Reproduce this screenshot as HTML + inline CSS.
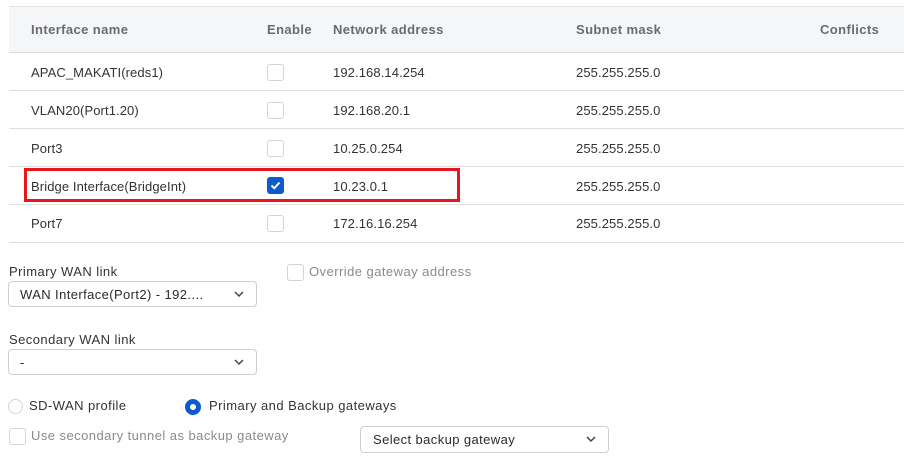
<!DOCTYPE html>
<html><head><style>
*{box-sizing:border-box;margin:0;padding:0}
body{width:904px;height:461px;background:#fff;font-family:"Liberation Sans",sans-serif;font-size:13px;color:#2b2b2b;position:relative;overflow:hidden;letter-spacing:0.1px}
.abs{position:absolute}
.hdr{left:9px;top:6px;width:895px;height:47px;background:#f5f6f8;border-top:1px solid #e3e3e3;border-bottom:1px solid #dcdcdc}
.th{position:absolute;top:22px;font-weight:bold;color:#6b6b6b;font-size:13px;letter-spacing:0.4px}
.row{left:9px;width:895px;height:38px;border-bottom:1px solid #dedede}
.cb{position:absolute;width:17px;height:17px;border:1px solid #d4d4d4;border-radius:3px;background:#fff}
.sel{position:absolute;height:26px;border:1px solid #d0d0d0;border-radius:4px;background:#fff}
.sel span{position:absolute;left:11px;top:5px;letter-spacing:0.4px}
.chev{position:absolute;right:12px;top:8px}
.lbl{position:absolute;color:#333}
.f{letter-spacing:0.45px}
.grey{color:#8a8a8a}
</style></head><body>
<div class="abs hdr"></div>
<div class="th" style="left:31px">Interface name</div>
<div class="th" style="left:267px">Enable</div>
<div class="th" style="left:333px">Network address</div>
<div class="th" style="left:576px">Subnet mask</div>
<div class="th" style="left:820px">Conflicts</div>

<div class="abs row" style="top:53px"></div>
<div class="abs row" style="top:91px"></div>
<div class="abs row" style="top:129px"></div>
<div class="abs row" style="top:167px"></div>
<div class="abs row" style="top:205px"></div>

<div class="lbl" style="left:31px;top:65px">APAC_MAKATI(reds1)</div>
<div class="lbl" style="left:31px;top:103px">VLAN20(Port1.20)</div>
<div class="lbl" style="left:31px;top:141px">Port3</div>
<div class="lbl" style="left:31px;top:179px">Bridge Interface(BridgeInt)</div>
<div class="lbl" style="left:31px;top:216px">Port7</div>

<div class="cb" style="left:267px;top:64px"></div>
<div class="cb" style="left:267px;top:102px"></div>
<div class="cb" style="left:267px;top:140px"></div>
<div class="cb" style="left:267px;top:177px;background:#0a5ccc;border-color:#0a5ccc"><svg width="15" height="15" viewBox="0 0 15 15" style="position:absolute;left:0;top:0"><path d="M3.5 7.5 L6.3 10.2 L11.5 4.5" stroke="#fff" stroke-width="2" fill="none"/></svg></div>
<div class="cb" style="left:267px;top:215px"></div>

<div class="lbl" style="left:333px;top:65px">192.168.14.254</div>
<div class="lbl" style="left:333px;top:103px">192.168.20.1</div>
<div class="lbl" style="left:333px;top:141px">10.25.0.254</div>
<div class="lbl" style="left:333px;top:179px">10.23.0.1</div>
<div class="lbl" style="left:333px;top:216px">172.16.16.254</div>
<div class="lbl" style="left:576px;top:65px">255.255.255.0</div>
<div class="lbl" style="left:576px;top:103px">255.255.255.0</div>
<div class="lbl" style="left:576px;top:141px">255.255.255.0</div>
<div class="lbl" style="left:576px;top:179px">255.255.255.0</div>
<div class="lbl" style="left:576px;top:216px">255.255.255.0</div>

<div class="abs" style="left:24px;top:168px;width:436px;height:34px;border:3px solid #e8141e"></div>

<div class="lbl f" style="left:9px;top:264px">Primary WAN link</div>
<div class="sel" style="left:8px;top:281px;width:249px"><span>WAN Interface(Port2) - 192....</span><svg class="chev" width="10" height="8" viewBox="0 0 10 8"><path d="M1 2 L5 6 L9 2" stroke="#444" stroke-width="1.5" fill="none"/></svg></div>
<div class="cb" style="left:287px;top:264px"></div>
<div class="lbl grey f" style="left:309px;top:264px">Override gateway address</div>

<div class="lbl f" style="left:9px;top:332px">Secondary WAN link</div>
<div class="sel" style="left:8px;top:349px;width:249px"><span>-</span><svg class="chev" width="10" height="8" viewBox="0 0 10 8"><path d="M1 2 L5 6 L9 2" stroke="#444" stroke-width="1.5" fill="none"/></svg></div>

<div class="abs" style="left:8px;top:399px;width:15px;height:15px;border:1px solid #d4d4d4;border-radius:50%"></div>
<div class="lbl f" style="left:29px;top:398px">SD-WAN profile</div>
<div class="abs" style="left:185px;top:399px;width:16px;height:16px;border:5px solid #0a5ccc;border-radius:50%;background:#fff"></div>
<div class="lbl f" style="left:209px;top:398px">Primary and Backup gateways</div>

<div class="cb" style="left:9px;top:428px"></div>
<div class="lbl grey f" style="left:31px;top:428px">Use secondary tunnel as backup gateway</div>
<div class="sel" style="left:360px;top:426px;width:249px;height:27px"><span style="left:12px;top:5px">Select backup gateway</span><svg class="chev" width="10" height="8" viewBox="0 0 10 8"><path d="M1 2 L5 6 L9 2" stroke="#444" stroke-width="1.5" fill="none"/></svg></div>
</body></html>
